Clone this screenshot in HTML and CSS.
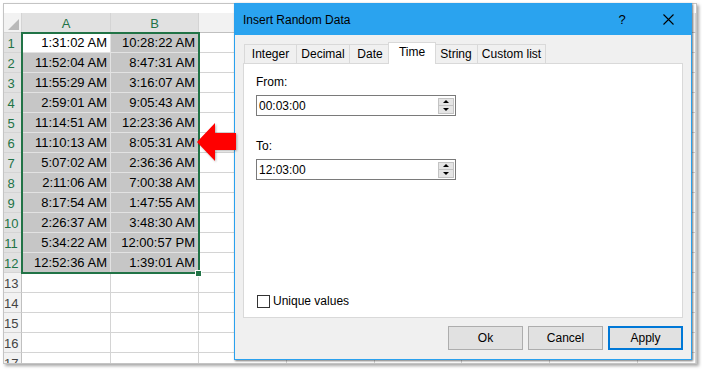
FILE: index.html
```html
<!DOCTYPE html>
<html lang="en">
<head>
  <meta charset="UTF-8">
  <title>Insert Random Data</title>
  <link rel="stylesheet" href="styles.css">
</head>
<body>
  <div class="stage">
    <div class="sheet">
      <div class="grid" id="grid"></div>
      <div class="selection"><span class="fill-handle"></span></div>
    </div>

    <svg class="arrow" width="44" height="44" viewBox="0 0 44 44">
      <polygon points="2,22 20,3 20,13 41,13 41,30 20,30 20,41" fill="#ff0000"/>
    </svg>

    <div class="dialog">
      <div class="titlebar">
        <span class="title">Insert Random Data</span>
        <span class="help">?</span>
        <span class="close">
          <svg width="11" height="11" viewBox="0 0 11 11">
            <path d="M0.5 0.5 L10.5 10.5 M10.5 0.5 L0.5 10.5" stroke="#000" stroke-width="1.1" fill="none"/>
          </svg>
        </span>
      </div>

      <div class="dialog-body">
        <div class="tabs">
          <span class="tab tab-integer">Integer</span>
          <span class="tab tab-decimal">Decimal</span>
          <span class="tab tab-date">Date</span>
          <span class="tab active">Time</span>
          <span class="tab tab-string">String</span>
          <span class="tab tab-custom">Custom list</span>
        </div>

        <div class="panel">
          <div class="field-label">From:</div>
          <div class="spinbox">
            <span class="value">00:03:00</span>
            <span class="spin"><span class="up"></span><span class="down"></span></span>
          </div>

          <div class="field-label to">To:</div>
          <div class="spinbox">
            <span class="value">12:03:00</span>
            <span class="spin"><span class="up"></span><span class="down"></span></span>
          </div>

          <label class="check"><span class="box"></span>Unique values</label>
        </div>

        <div class="actions">
          <button class="btn">Ok</button>
          <button class="btn">Cancel</button>
          <button class="btn btn-default">Apply</button>
        </div>
      </div>
    </div>
  </div>

  <script>
    const times = [
      ['1:31:02 AM', '10:28:22 AM'],
      ['11:52:04 AM', '8:47:31 AM'],
      ['11:55:29 AM', '3:16:07 AM'],
      ['2:59:01 AM', '9:05:43 AM'],
      ['11:14:51 AM', '12:23:36 AM'],
      ['11:10:13 AM', '8:05:31 AM'],
      ['5:07:02 AM', '2:36:36 AM'],
      ['2:11:06 AM', '7:00:38 AM'],
      ['8:17:54 AM', '1:47:55 AM'],
      ['2:26:37 AM', '3:48:30 AM'],
      ['5:34:22 AM', '12:00:57 PM'],
      ['12:52:36 AM', '1:39:01 AM']
    ];
    const cols = ['A', 'B', 'C', 'D', 'E', 'F', 'G', 'H'];
    const grid = document.getElementById('grid');

    function addCell(cls, text) {
      const el = document.createElement('div');
      el.className = cls;
      el.textContent = text || '';
      grid.appendChild(el);
    }

    addCell('corner');
    cols.forEach((c, i) => addCell(i < 2 ? 'colhdr sel' : 'colhdr', c));

    for (let r = 1; r <= 17; r++) {
      const inSel = r <= times.length;
      addCell(inSel ? 'rowhdr sel' : 'rowhdr', r);
      cols.forEach((c, i) => {
        if (inSel && i < 2) {
          const cls = (r === 1 && i === 0) ? 'cell active' : 'cell sel';
          addCell(cls, times[r - 1][i]);
        } else {
          addCell('cell');
        }
      });
    }
  </script>
</body>
</html>
```

FILE: styles.css
```css
body {
  margin: 0;
  background: #fff;
  font-family: "Liberation Sans", Arial, sans-serif;
}

.stage {
  position: relative;
  width: 702px;
  height: 372px;
  overflow: hidden;
}

/* spreadsheet */

.sheet {
  position: relative;
  margin: 3px 0 0 3px;
  width: 694px;
  height: 361px;
  box-sizing: border-box;
  border: 1px solid #c4c4c4;
  padding-top: 9px;
  background: #fff;
  overflow: hidden;
  box-shadow: 2px 2px 3px rgba(0, 0, 0, 0.35);
}

.grid {
  display: grid;
  grid-template-columns: 18px 89px 88px 88px 88px 87px 88px 88px 1fr;
  grid-auto-rows: 20px;
  font-size: 13px;
  line-height: 15px;
}

.grid > div {
  box-sizing: border-box;
  border-right: 1px solid #d4d4d4;
  border-bottom: 1px solid #d4d4d4;
}

.corner {
  position: relative;
  background: #f2f2f2;
}

.corner::after {
  content: "";
  position: absolute;
  right: 2px;
  bottom: 2px;
  width: 11px;
  height: 11px;
  background: #b9b9b9;
  clip-path: polygon(100% 0, 100% 100%, 0 100%);
}

.colhdr {
  background: #f2f2f2;
  color: #444;
  text-align: center;
  padding-top: 3px;
  border-bottom-color: #c0c0c0 !important;
}

.rowhdr {
  background: #f2f2f2;
  color: #444;
  text-align: center;
  padding: 3px 3px 0 0;
  border-right-color: #c0c0c0 !important;
}

.colhdr.sel,
.rowhdr.sel {
  background: #e1e1e1;
  color: #217346;
}

.cell {
  display: flex;
  align-items: flex-end;
  justify-content: flex-end;
  padding: 0 3px 2px 0;
  color: #000;
  white-space: nowrap;
}

.cell.sel {
  background: #c6c6c6;
  border-color: #e2e2e2 !important;
}

.cell.active {
  background: #fff;
  border-color: #e2e2e2 !important;
}

.selection {
  position: absolute;
  left: 17px;
  top: 28px;
  width: 179px;
  height: 242px;
  box-sizing: border-box;
  border: 2px solid #217346;
}

.fill-handle {
  position: absolute;
  right: -4px;
  bottom: -5px;
  width: 5px;
  height: 5px;
  background: #217346;
  border: 1px solid #fff;
}

/* red pointer */

.arrow {
  position: absolute;
  left: 195px;
  top: 120px;
  z-index: 5;
  filter: drop-shadow(1px 1px 1px rgba(0, 0, 0, 0.3));
}

/* dialog window */

.dialog {
  position: absolute;
  left: 234px;
  top: 3px;
  width: 458px;
  height: 357px;
  box-sizing: border-box;
  border: 1px solid #2aa1ee;
  background: #f0f0f0;
  display: flex;
  flex-direction: column;
  font-size: 12px;
  color: #000;
  box-shadow: 1px 1px 2px rgba(0, 0, 0, 0.55);
}

.titlebar {
  height: 31px;
  background: #2aa3ef;
  display: flex;
  align-items: center;
  padding-left: 8px;
  flex-shrink: 0;
}

.title {
  font-size: 12px;
}

.help {
  width: 30px;
  margin-left: auto;
  margin-right: 8px;
  text-align: center;
  font-size: 13px;
}

.close {
  width: 46px;
  display: flex;
  justify-content: center;
}

.dialog-body {
  flex: 1;
  display: flex;
  flex-direction: column;
  padding: 7px 8px 9px 8px;
}

.tabs {
  display: flex;
  align-items: flex-end;
  padding-left: 1px;
}

.tab {
  height: 19px;
  box-sizing: border-box;
  border: 1px solid #d9d9d9;
  border-bottom: none;
  background: #f0f0f0;
  text-align: center;
  line-height: 18px;
  margin-right: -1px;
}

.tab-integer { width: 53px; }
.tab-decimal { width: 54px; }
.tab-date { width: 42px; }
.tab-string { width: 44px; }
.tab-custom { width: 69px; }

.tab.active {
  position: relative;
  z-index: 1;
  width: 48px;
  height: 22px;
  margin: 0 -2px -1px -2px;
  line-height: 18px;
  background: #fff;
}

.panel {
  height: 255px;
  box-sizing: border-box;
  border: 1px solid #d9d9d9;
  background: #fff;
  display: flex;
  flex-direction: column;
  padding: 11px 12px 9px 12px;
}

.field-label {
  line-height: 14px;
}

.field-label.to {
  margin-top: 23px;
}

.spinbox {
  width: 200px;
  height: 21px;
  margin-top: 6px;
  box-sizing: border-box;
  border: 1px solid #7a7a7a;
  display: flex;
  align-items: center;
  padding-left: 2px;
}

.spinbox .value {
  flex: 1;
}

.spin {
  width: 16px;
  height: 16px;
  margin-right: 1px;
  display: flex;
  flex-direction: column;
}

.spin span {
  flex: 1;
  background: #e5e5e5;
  border: 1px solid #c3c3c3;
  display: flex;
  align-items: center;
  justify-content: center;
}

.spin span + span {
  border-top: none;
}

.spin .up::after {
  content: "";
  border-left: 3px solid transparent;
  border-right: 3px solid transparent;
  border-bottom: 3px solid #000;
}

.spin .down::after {
  content: "";
  border-left: 3px solid transparent;
  border-right: 3px solid transparent;
  border-top: 3px solid #000;
}

.check {
  margin-top: auto;
  display: flex;
  align-items: center;
  line-height: 14px;
  padding-left: 1px;
}

.check .box {
  width: 13px;
  height: 13px;
  box-sizing: border-box;
  border: 1px solid #333;
  background: #fff;
  margin-right: 3px;
}

.actions {
  display: flex;
  justify-content: flex-end;
  gap: 5px;
  margin-top: 8px;
}

.btn {
  width: 75px;
  height: 24px;
  box-sizing: border-box;
  border: 1px solid #adadad;
  background: #e1e1e1;
  font-family: "Liberation Sans", Arial, sans-serif;
  font-size: 12px;
  color: #000;
  padding: 0;
}

.btn-default {
  border: 2px solid #0078d7;
}
```
